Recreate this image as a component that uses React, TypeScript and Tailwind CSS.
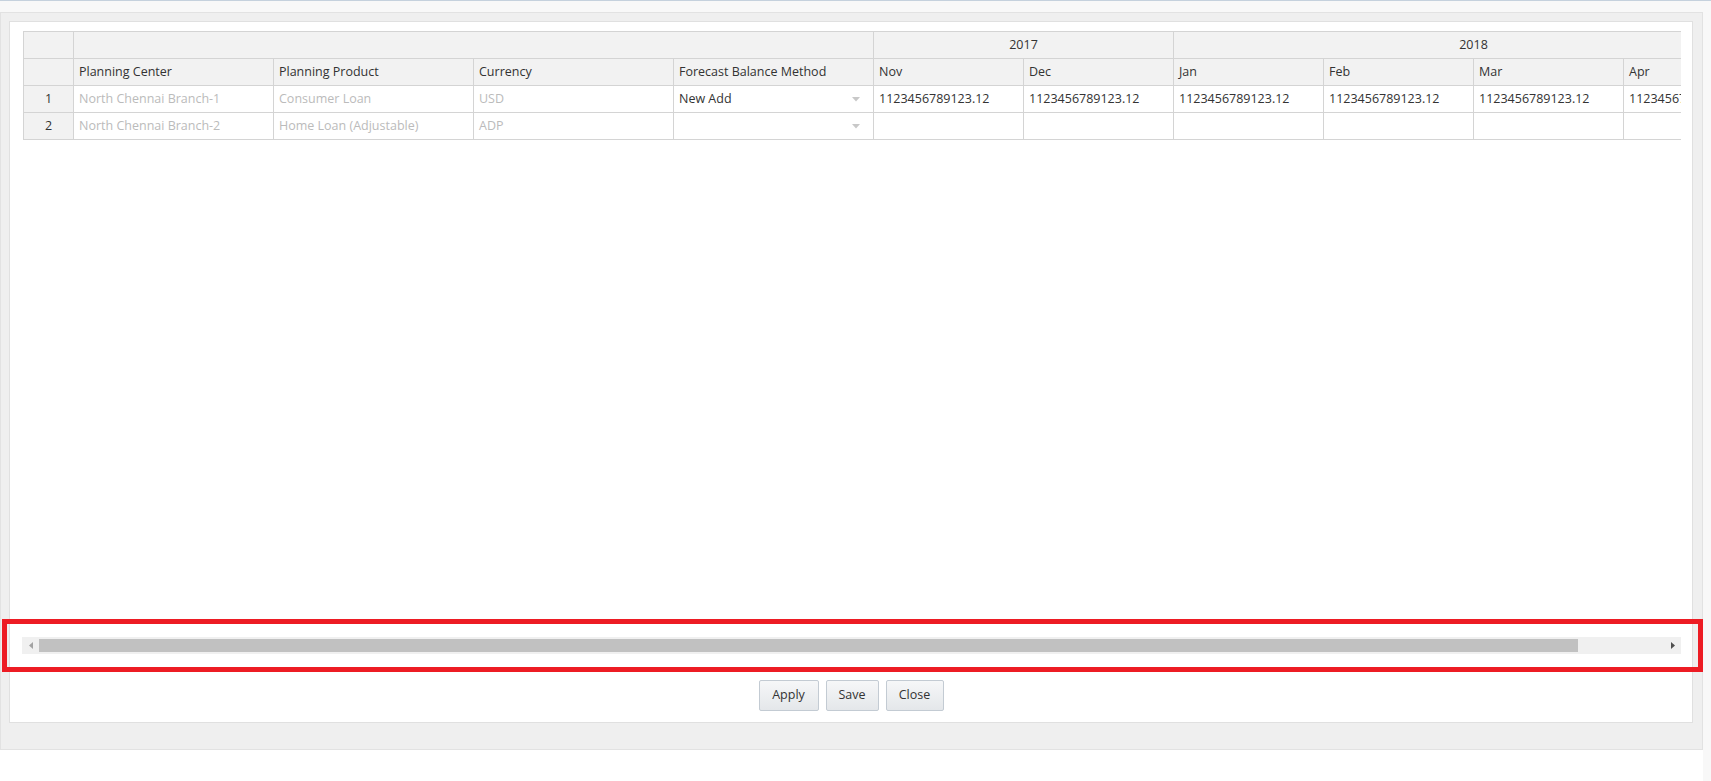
const font = { fontFamily: '"Open Sans", "Noto Sans", sans-serif' };

type Row = {
  n: number;
  center: string;
  product: string;
  currency: string;
  method: string;
  values: string[];
};

const months = ["Nov", "Dec", "Jan", "Feb", "Mar", "Apr"];

const rows: Row[] = [
  {
    n: 1,
    center: "North Chennai Branch-1",
    product: "Consumer Loan",
    currency: "USD",
    method: "New Add",
    values: months.map(() => "1123456789123.12"),
  },
  {
    n: 2,
    center: "North Chennai Branch-2",
    product: "Home Loan (Adjustable)",
    currency: "ADP",
    method: "",
    values: months.map(() => ""),
  },
];

const th = "h-[27px] border border-[#d4d4d4] bg-[#f2f2f2] px-[5px] font-normal text-[#333]";
const td = "h-[27px] border border-[#d4d4d4] px-[5px] whitespace-nowrap overflow-hidden";

function Caret({ className }: { className: string }) {
  return (
    <svg width="8" height="5" viewBox="0 0 8 5" className={className}>
      <path d="M0 0 L8 0 L4 4.5 Z" fill="currentColor" />
    </svg>
  );
}

function ScrollBar() {
  return (
    <div className="ml-[-1px] flex h-[17px] w-[1659px] items-center bg-[#f0f0f0]">
      <div className="flex h-full w-[17px] items-center justify-center text-[#a3a3a3]">
        <svg width="4" height="7" viewBox="0 0 4 7">
          <path d="M4 0 L4 7 L0 3.5 Z" fill="currentColor" />
        </svg>
      </div>
      <div className="h-[13px] w-[1539px] bg-[#c1c1c1]" />
      <div className="flex-1" />
      <div className="flex h-full w-[17px] items-center justify-center text-[#505050]">
        <svg width="4" height="7" viewBox="0 0 4 7">
          <path d="M0 0 L4 3.5 L0 7 Z" fill="currentColor" />
        </svg>
      </div>
    </div>
  );
}

function Button({ label, w }: { label: string; w: string }) {
  return (
    <button
      className={`${w} h-[31px] rounded-[2px] border border-[#c3cbd3] bg-gradient-to-b from-[#f6f7f8] to-[#e4e7ea] text-[12.5px] text-[#333]`}
    >
      {label}
    </button>
  );
}

export default function App() {
  return (
    <div className="relative flex min-h-[781px] bg-white text-[12.5px]" style={font}>
      <div className="flex w-[1703px] flex-col">
        <div className="h-[12px] border-t border-[#c5d1dd] bg-[#f8f8f8]" />
        <div className="h-[738px] border border-[#e2e2e2] bg-[#efefef] pl-[8px] pr-[9px] pt-[8px]">
          <div className="flex h-[702px] flex-col border border-[#e0e0e0] bg-white pl-[13px] pt-[9px]">
            <div className="h-[606px] w-[1658px] overflow-hidden">
              <table className="w-[1750px] table-fixed border-collapse">
                <colgroup>
                  <col className="w-[50px]" />
                  <col className="w-[200px]" />
                  <col className="w-[200px]" />
                  <col className="w-[200px]" />
                  <col className="w-[200px]" />
                  {months.map((m) => (
                    <col key={m} className="w-[150px]" />
                  ))}
                </colgroup>
                <thead>
                  <tr>
                    <th className={th} />
                    <th className={th} colSpan={4} />
                    <th className={`${th} text-center`} colSpan={2}>
                      2017
                    </th>
                    <th className={`${th} text-center`} colSpan={4}>
                      2018
                    </th>
                  </tr>
                  <tr>
                    <th className={th} />
                    {["Planning Center", "Planning Product", "Currency", "Forecast Balance Method", ...months].map(
                      (h) => (
                        <th key={h} className={`${th} text-left`}>
                          {h}
                        </th>
                      )
                    )}
                  </tr>
                </thead>
                <tbody>
                  {rows.map((r) => (
                    <tr key={r.n}>
                      <td className={`${td} bg-[#f2f2f2] text-center text-[#333]`}>{r.n}</td>
                      <td className={`${td} text-[#bbbbbb]`}>{r.center}</td>
                      <td className={`${td} text-[#bbbbbb]`}>{r.product}</td>
                      <td className={`${td} text-[#bbbbbb]`}>{r.currency}</td>
                      <td className={`${td} text-[#333]`}>
                        <div className="flex items-center justify-between pr-[8px]">
                          <span>{r.method}</span>
                          <Caret className="text-[#c8c8c8]" />
                        </div>
                      </td>
                      {r.values.map((v, i) => (
                        <td key={i} className={`${td} text-[#333]`}>
                          {v}
                        </td>
                      ))}
                    </tr>
                  ))}
                </tbody>
              </table>
            </div>
            <ScrollBar />
            <div className="mt-[26px] flex justify-center gap-[7px] pr-[13px]">
              <Button label="Apply" w="w-[60px]" />
              <Button label="Save" w="w-[53px]" />
              <Button label="Close" w="w-[58px]" />
            </div>
          </div>
        </div>
      </div>
      <div className="flex-1 border-t border-[#c5d1dd] bg-[#f8f8f8]" />
      <div className="pointer-events-none absolute left-[2px] top-[619px] h-[53px] w-[1701px] border-[5px] border-[#ed1c24]" />
    </div>
  );
}
